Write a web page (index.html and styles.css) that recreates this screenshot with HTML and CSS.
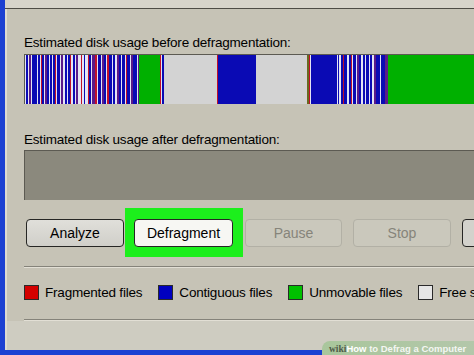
FILE: index.html
```html
<!DOCTYPE html>
<html>
<head>
<meta charset="utf-8">
<link rel="stylesheet" href="styles.css">
</head>
<body>
<div class="window">
  <div class="topstrip"></div>
  <div class="panel">
    <div class="label label-before">Estimated disk usage before defragmentation:</div>
    <div class="bar bar-before"></div>
    <div class="label label-after">Estimated disk usage after defragmentation:</div>
    <div class="bar bar-after"></div>
    <div class="buttons">
      <div class="btn btn-analyze">Analyze</div>
      <div class="highlight"><div class="btn btn-focus">Defragment</div></div>
      <div class="btn btn-disabled btn-pause">Pause</div>
      <div class="btn btn-disabled btn-stop">Stop</div>
      <div class="btn btn-more"></div>
    </div>
    <div class="sep"></div>
    <div class="legend">
      <div class="item"><span class="sw sw-red"></span>Fragmented files</div>
      <div class="item"><span class="sw sw-blue"></span>Contiguous files</div>
      <div class="item"><span class="sw sw-green"></span>Unmovable files</div>
      <div class="item"><span class="sw sw-free"></span>Free space</div>
    </div>
    <div class="sep sep-bottom"></div>
  </div>
  <div class="lower"></div>
</div>
<div class="watermark"><span class="wm-wiki">wiki</span><span class="wm-how">How</span> to Defrag a Computer</div>
</body>
</html>
```
FILE: styles.css
```css
html, body {
  margin: 0;
  padding: 0;
}
body {
  width: 474px;
  height: 355px;
  overflow: hidden;
  position: relative;
  background: #c6c3b6;
  font-family: "Liberation Sans", Arial, sans-serif;
  color: #000;
}
.window {
  height: 350px;
  border-left: 5px solid #1c40d2;
  border-bottom: 5px solid #1c40d2;
  display: flex;
  flex-direction: column;
  box-sizing: content-box;
  overflow: hidden;
}
.topstrip {
  height: 8px;
  flex: none;
  background: #d7d4ca;
  border-bottom: 1px solid #4e4c45;
}
.panel {
  flex: none;
  border-left: 2px solid #dedbd1;
  padding-left: 17px;
  display: flex;
  flex-direction: column;
  height: 312px;
}
.label {
  font-size: 13.5px;
  letter-spacing: -0.2px;
  line-height: 16px;
  white-space: nowrap;
}
.label-before {
  margin-top: 26px;
}
.label-after {
  margin-top: 28px;
}
.bar {
  height: 49px;
  width: 470px;
  border-top: 1px solid #5c5a52;
  border-left: 1px solid #5c5a52;
  flex: none;
}
.bar-before {
  margin-top: 3px;
  background: linear-gradient(to right,
    #e4e4f4 0 1px, #0a0ab4 1px 3px, #e4e4f4 3px 4px, #5a1a8a 4px 6px, #e4e4f4 6px 7px,
    #0a0ab4 7px 12px, #e4e4f4 12px 13px, #0a0ab4 13px 15px, #e4e4f4 15px 16px, #c0102a 16px 17px,
    #0a0ab4 17px 19px, #e4e4f4 19px 20px, #5a1a8a 20px 22px, #0a0ab4 22px 24px, #e4e4f4 24px 25px,
    #0a0ab4 25px 27px, #e4e4f4 27px 28px, #0a0ab4 28px 30px, #c0102a 30px 31px, #e4e4f4 31px 32px,
    #0a0ab4 32px 35px, #e4e4f4 35px 36px, #5a1a8a 36px 38px, #e4e4f4 38px 40px, #0a0ab4 40px 42px,
    #e4e4f4 42px 43px, #0a0ab4 43px 45px, #c0102a 45px 46px, #e4e4f4 46px 48px, #0a0ab4 48px 50px,
    #e4e4f4 50px 51px, #5a1a8a 51px 53px, #e4e4f4 53px 56px, #c0102a 56px 57px, #e4e4f4 57px 59px,
    #0a0ab4 59px 60px, #e4e4f4 60px 63px, #c0102a 63px 64px, #0a0ab4 64px 66px, #e4e4f4 66px 67px,
    #5a1a8a 67px 70px, #c0102a 70px 72px, #e4e4f4 72px 73px, #0a0ab4 73px 76px, #e4e4f4 76px 77px,
    #5a1a8a 77px 79px, #0a0ab4 79px 81px, #e4e4f4 81px 82px, #c0102a 82px 84px, #0a0ab4 84px 87px,
    #e4e4f4 87px 88px, #0a0ab4 88px 90px, #e4e4f4 90px 92px, #5a1a8a 92px 94px, #0a0ab4 94px 96px,
    #e4e4f4 96px 97px, #0a0ab4 97px 100px, #e4e4f4 100px 101px, #c0102a 101px 102px, #0a0ab4 102px 105px,
    #e4e4f4 105px 106px, #5a1a8a 106px 108px, #0a0ab4 108px 112px, #e4e4f4 112px 113px, #5a1a8a 113px 114px,
    #00b000 114px 135px, #c0102a 135px 136px, #e4e4f4 136px 137px, #0a0ab4 137px 139px,
    #d3d3d3 139px 192px, #c0102a 192px 193px, #0a0ab4 193px 231px, #d3d3d3 231px 282px,
    #6a6a20 282px 284px, #c0102a 284px 285px, #e4e4f4 285px 286px, #0a0ab4 286px 312px,
    #e4e4f4 312px 313px, #0a0ab4 313px 314px, #e4e4f4 314px 316px, #0a0ab4 316px 318px, #c0102a 318px 319px,
    #0a0ab4 319px 322px, #e4e4f4 322px 324px, #0a0ab4 324px 326px, #c0102a 326px 327px, #e4e4f4 327px 328px,
    #0a0ab4 328px 331px, #e4e4f4 331px 332px, #5a1a8a 332px 334px, #0a0ab4 334px 336px, #e4e4f4 336px 338px,
    #0a0ab4 338px 340px, #e4e4f4 340px 341px, #0a0ab4 341px 344px, #e4e4f4 344px 345px, #0a0ab4 345px 347px,
    #e4e4f4 347px 349px, #5a1a8a 349px 351px, #0a0ab4 351px 355px, #e4e4f4 355px 356px, #0a0ab4 356px 360px,
    #5a1a8a 360px 363px, #00b000 363px 100%);
}
.bar-after {
  margin-top: 2px;
  background: #8b897d;
}
.buttons {
  margin-top: 19px;
  display: flex;
  align-items: center;
  height: 28px;
  flex: none;
}
.btn {
  box-sizing: border-box;
  width: 98px;
  height: 28px;
  border: 1px solid #262624;
  border-radius: 4px;
  font-size: 14px;
  line-height: 26px;
  text-align: center;
  flex: none;
}
.btn-analyze {
  margin-left: 2px;
  background: linear-gradient(#e0dfda, #d0cfc9);
}
.highlight {
  background: #1cef1c;
  padding: 11px 10px 10px 9px;
  margin: -11px -10px -10px 1px;
  flex: none;
}
.btn-focus {
  width: 99px;
  background: #f7f7f3;
}
.btn-disabled {
  border-color: #b2b0a5;
  background: #cac8bc;
  color: #86847a;
}
.btn-pause {
  margin-left: 12px;
  width: 97px;
}
.btn-stop {
  margin-left: 11px;
}
.btn-more {
  margin-left: 11px;
  background: #d3d2cc;
}
.sep {
  margin-top: 19px;
  height: 1px;
  width: 460px;
  background: #85837a;
  border-bottom: 1px solid #e2dfd5;
  flex: none;
}
.legend {
  margin-top: 17px;
  display: flex;
  align-items: center;
  height: 16px;
  font-size: 13.5px;
  letter-spacing: -0.2px;
  white-space: nowrap;
}
.item {
  display: flex;
  align-items: center;
  margin-right: 16px;
}
.sw {
  width: 13px;
  height: 13px;
  border: 1px solid #2a2a2a;
  margin-right: 6px;
  flex: none;
}
.sw-red { background: #d40000; }
.sw-blue { background: #0000c0; }
.sw-green { background: #00c000; }
.sw-free { background: #e6e6e6; }
.sep-bottom {
  margin-top: 19px;
  width: 470px;
}
.lower {
  flex: 1;
  background: #ceccc1;
  border-left: 2px solid #dedbd1;
}
.watermark {
  position: absolute;
  left: 322px;
  top: 341px;
  right: 0;
  height: 14px;
  padding-left: 7px;
  border-top-left-radius: 8px;
  background: linear-gradient(to right, #a9c69c, #b3c7aa);
  font-family: "Liberation Sans", sans-serif;
  font-size: 9.5px;
  font-weight: bold;
  line-height: 15px;
  color: #f4f6f2;
  white-space: nowrap;
}
.wm-wiki {
  color: #4e5a48;
  font-family: "Liberation Serif", serif;
}
.wm-how {
  color: #ffffff;
}
```
